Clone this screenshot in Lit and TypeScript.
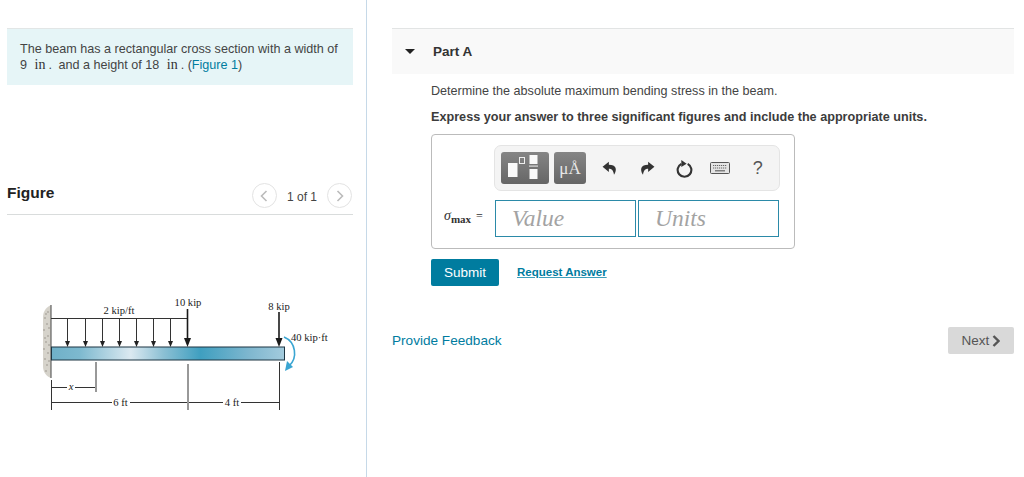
import { LitElement, html, css, svg } from 'lit';
import { customElement } from 'lit/decorators.js';

const loadArrows = [67, 85, 102, 119, 136, 153, 170];
// speckles on the wall, laid out by hand
const wallDots = [
  [45, 318], [47, 324], [44, 330], [48, 336], [46, 342], [44, 349], [48, 353], [45, 359], [47, 365], [46, 371],
  [48, 312], [49, 328], [49, 345], [49, 361], [46, 314], [45, 338],
];

@customElement('beam-figure')
export class BeamFigure extends LitElement {
  static styles = css`
    :host {
      display: block;
    }
    svg {
      display: block;
    }
    text {
      font-family: 'Liberation Serif', serif;
      font-size: 10.6px;
      fill: #222;
    }
  `;

  render() {
    // viewBox uses the figure's page coordinates so the drawing stays easy to read
    return html`
      <svg width="320" height="130" viewBox="30 290 320 130">
        <defs>
          <linearGradient id="beam" x1="0" x2="1" y1="0" y2="0">
            <stop offset="0" stop-color="#6fb0c8" />
            <stop offset="0.12" stop-color="#7db9cf" />
            <stop offset="0.34" stop-color="#dbe9f1" />
            <stop offset="0.48" stop-color="#8cc0d4" />
            <stop offset="0.64" stop-color="#3f9fc0" />
            <stop offset="0.85" stop-color="#7fb7cf" />
            <stop offset="1" stop-color="#a3cbdd" />
          </linearGradient>
        </defs>

        <path d="M51 305 C45 308 43 312 43 318 L43 366 C43 372 46 376 51 378 Z" fill="#d6d3cb" />
        ${wallDots.map(([x, y]) => svg`<circle cx=${x} cy=${y} r="0.8" fill="#96938a" />`)}
        <line x1="51" x2="51" y1="305" y2="378" stroke="#444" />
        <rect x="51.5" y="347" width="233" height="13" fill="url(#beam)" stroke="#1d3542" stroke-width="1" />

        <line x1="51" x2="187" y1="318.5" y2="318.5" stroke="#333" />
        ${loadArrows.map(
          (x) => svg`
            <line x1=${x + 0.5} x2=${x + 0.5} y1="319" y2="343" stroke="#333" />
            <path d="M${x - 2} 341 L${x + 3} 341 L${x + 0.5} 347 Z" fill="#222" />
          `
        )}

        <line x1="187.5" x2="187.5" y1="309" y2="340" stroke="#1a1a1a" stroke-width="1.6" />
        <path d="M184 338 L191 338 L187.5 347 Z" fill="#1a1a1a" />
        <line x1="279" x2="279" y1="312" y2="340" stroke="#1a1a1a" stroke-width="1.6" />
        <path d="M275.5 338 L282.5 338 L279 347 Z" fill="#1a1a1a" />

        <path d="M284 337 C296 342 298 358 289 366" fill="none" stroke="#3aa5d2" stroke-width="1.6" />
        <path d="M285 371 L287 361 L293 367 Z" fill="#3aa5d2" />

        <g stroke="#333">
          <line x1="51.5" x2="51.5" y1="380" y2="410" />
          <line x1="96" x2="96" y1="362" y2="392" />
          <line x1="188" x2="188" y1="364" y2="410" />
          <line x1="279.5" x2="279.5" y1="362" y2="410" />
          <line x1="52" x2="67" y1="387.5" y2="387.5" />
          <line x1="75" x2="95" y1="387.5" y2="387.5" />
          <line x1="52" x2="112" y1="402.5" y2="402.5" />
          <line x1="130" x2="187" y1="402.5" y2="402.5" />
          <line x1="189" x2="223" y1="402.5" y2="402.5" />
          <line x1="241" x2="279" y1="402.5" y2="402.5" />
        </g>

        <text x="119" y="314" text-anchor="middle">2 kip/ft</text>
        <text x="188" y="306" text-anchor="middle">10 kip</text>
        <text x="279" y="310" text-anchor="middle">8 kip</text>
        <text x="291" y="341">40 kip·ft</text>
        <text x="71" y="390" text-anchor="middle" font-style="italic">x</text>
        <text x="120.5" y="406" text-anchor="middle">6 ft</text>
        <text x="232" y="406" text-anchor="middle">4 ft</text>
      </svg>
    `;
  }
}

@customElement('app-root')
export class AppRoot extends LitElement {
  static styles = css`
    :host {
      display: block;
      width: 1024px;
      height: 477px;
      overflow: hidden;
      background: #fff;
      font-family: 'Liberation Sans', Arial, sans-serif;
      font-size: 12.6px;
      color: #444;
    }
    a {
      color: #007c9f;
      text-decoration: none;
    }
    .page {
      display: grid;
      grid-template-columns: 367px 1fr;
      height: 477px;
    }
    .left {
      border-right: 1px solid #c6d9e8;
      padding: 28px 13px 0 7px;
      box-sizing: border-box;
    }
    .intro {
      background: #e6f5f7;
      border-top: 1px solid #e2e6e6;
      height: 57px;
      box-sizing: border-box;
      padding: 12px 13px 0 13px;
      line-height: 16px;
      white-space: nowrap;
    }
    .unit {
      font-family: 'Liberation Serif', serif;
      font-size: 14px;
      color: #333;
      margin: 0 3px 0 4px;
    }
    .dot {
      margin-right: 3px;
    }
    .figure-head {
      margin-top: 96px;
      height: 33px;
      border-bottom: 1px solid #d9dcdc;
      display: flex;
      align-items: flex-start;
      justify-content: space-between;
    }
    .figure-title {
      font-size: 15.5px;
      font-weight: bold;
      color: #222;
      line-height: 17px;
      margin-top: 3px;
    }
    .pager {
      display: flex;
      align-items: center;
      gap: 10px;
      margin: 2px 1px 0 0;
      font-size: 12px;
    }
    .pager-count {
      padding-top: 3px;
    }
    .round {
      width: 25px;
      height: 25px;
      border: 1px solid #e3e3e3;
      border-radius: 50%;
      box-sizing: border-box;
      display: flex;
      align-items: center;
      justify-content: center;
    }
    .fig-wrap {
      margin: 75px 0 0 23px;
    }
    .right {
      padding: 28px 10px 0 25px;
    }
    .part-head {
      background: #f9f9f9;
      border-top: 1px solid #e2e4e4;
      height: 46px;
      box-sizing: border-box;
      display: flex;
      align-items: center;
      gap: 18px;
      padding-left: 13px;
      font-size: 13.5px;
      font-weight: bold;
      color: #333;
    }
    .caret {
      width: 0;
      height: 0;
      border-left: 5px solid transparent;
      border-right: 5px solid transparent;
      border-top: 5px solid #222;
    }
    .part-body {
      padding: 10px 0 0 39px;
    }
    .question {
      line-height: 14px;
    }
    .instr {
      margin-top: 12px;
      line-height: 14px;
      font-weight: bold;
      font-size: 12.65px;
      color: #3c3c3c;
    }
    .answer {
      margin-top: 10px;
      width: 364px;
      height: 115px;
      box-sizing: border-box;
      border: 1px solid #bbb;
      border-radius: 4px;
      padding: 10px 0 0 62px;
      position: relative;
    }
    .toolbar {
      width: 286px;
      height: 46px;
      box-sizing: border-box;
      background: #f4f4f4;
      border: 1px solid #e4e4e4;
      border-radius: 7px;
      display: flex;
      align-items: center;
      padding-left: 6px;
    }
    .tool {
      height: 32px;
      background: linear-gradient(#858585, #666);
      border-radius: 3px;
      display: flex;
      align-items: center;
      justify-content: center;
      box-sizing: border-box;
    }
    .tool.templates {
      width: 48px;
      margin-right: 5px;
    }
    .tool.units {
      width: 32px;
      margin-right: 5px;
      color: #e8e8e8;
      font-family: 'Liberation Serif', serif;
      font-size: 17px;
      padding-top: 2px;
    }
    .action {
      width: 37.5px;
      display: flex;
      justify-content: center;
      align-items: center;
    }
    .action.keys {
      margin-left: -2px;
    }
    .help {
      font-size: 18px;
      color: #555;
    }
    .fields {
      display: flex;
      gap: 2px;
      margin-top: 9px;
      margin-left: 1px;
    }
    .field {
      width: 141px;
      height: 37px;
      box-sizing: border-box;
      border: 1px solid #2b8aa8;
      padding: 4px 0 0 16px;
      font-family: 'Liberation Serif', serif;
      font-style: italic;
      font-size: 23.5px;
      color: #a3a3a3;
    }
    .label {
      position: absolute;
      left: 12px;
      top: 73px;
      font-family: 'Liberation Serif', serif;
      font-size: 12px;
      color: #333;
      white-space: nowrap;
    }
    .label i {
      font-size: 14px;
    }
    .label sub {
      font-size: 11px;
      font-weight: bold;
      vertical-align: -3px;
      line-height: 0;
      margin-right: 2px;
    }
    .actions {
      display: flex;
      align-items: center;
      gap: 18px;
      margin-top: 10px;
    }
    .submit {
      width: 68px;
      height: 27px;
      background: #007c9f;
      color: #fff;
      border-radius: 2px;
      display: flex;
      align-items: center;
      justify-content: center;
      font-size: 13.5px;
    }
    .request {
      font-weight: bold;
      font-size: 11.5px;
      text-decoration: underline;
      text-decoration-color: #3d9fbb;
      margin-bottom: 2px;
    }
    .foot {
      display: flex;
      align-items: center;
      justify-content: space-between;
      margin-top: 41px;
    }
    .feedback {
      font-size: 13.6px;
    }
    .next {
      width: 66px;
      height: 27px;
      background: #d9d9d9;
      border-radius: 2px;
      color: #555;
      display: flex;
      align-items: center;
      justify-content: center;
      gap: 3px;
      font-size: 13.5px;
    }
  `;

  render() {
    return html`
      <div class="page">
        <section class="left">
          <div class="intro">
            The beam has a rectangular cross section with a width of<br />
            9 <span class="unit">in</span><span class="dot">.</span> and a height of 18 <span class="unit">in</span>.
            (<a href="#">Figure 1</a>)
          </div>
          <div class="figure-head">
            <div class="figure-title">Figure</div>
            <div class="pager">
              <span class="round">
                <svg width="8" height="12" viewBox="0 0 8 12"><path d="M6.5 1 L1.5 6 L6.5 11" fill="none" stroke="#bbb" stroke-width="1.6" /></svg>
              </span>
              <span class="pager-count">1 of 1</span>
              <span class="round">
                <svg width="8" height="12" viewBox="0 0 8 12"><path d="M1.5 1 L6.5 6 L1.5 11" fill="none" stroke="#bbb" stroke-width="1.6" /></svg>
              </span>
            </div>
          </div>
          <div class="fig-wrap"><beam-figure></beam-figure></div>
        </section>

        <section class="right">
          <div class="part-head"><span class="caret"></span><span>Part A</span></div>
          <div class="part-body">
            <div class="question">Determine the absolute maximum bending stress in the beam.</div>
            <div class="instr">Express your answer to three significant figures and include the appropriate units.</div>
            <div class="answer">
              <div class="toolbar">
                <div class="tool templates">
                  <svg width="40" height="32" viewBox="0 0 40 32">
                    <rect x="3" y="11" width="9.5" height="14" fill="#fafafa" />
                    <rect x="14.5" y="5.5" width="5" height="6" fill="none" stroke="#eee" />
                    <rect x="24.5" y="3" width="8" height="9" fill="#fafafa" />
                    <rect x="24" y="13.5" width="9" height="1.2" fill="#ddd" />
                    <rect x="24.5" y="17" width="8" height="10" fill="#fafafa" />
                  </svg>
                </div>
                <div class="tool units">μÅ</div>
                <span class="action">
                  <svg width="16" height="16" viewBox="0 0 14 14"><path d="M6 1.5 L0.5 6 L6 10.5 L6 7.6 C8.5 7.6 10 9 10.5 13 C13.5 8.5 12.5 4.2 6 4.2 Z" fill="#333" /></svg>
                </span>
                <span class="action">
                  <svg width="16" height="16" viewBox="0 0 14 14"><path d="M8 1.5 L13.5 6 L8 10.5 L8 7.6 C5.5 7.6 4 9 3.5 13 C0.5 8.5 1.5 4.2 8 4.2 Z" fill="#333" /></svg>
                </span>
                <span class="action">
                  <svg width="17" height="19" viewBox="0 0 16 18"><path d="M5 4.6 A6.5 6.5 0 1 0 11 4.6" fill="none" stroke="#333" stroke-width="2" /><path d="M5 1 L10 4.5 L5 7.5 Z" fill="#333" /></svg>
                </span>
                <span class="action keys">
                  <svg width="20" height="12" viewBox="0 0 20 12">
                    <rect x="0.5" y="0.5" width="19" height="11" rx="1" fill="#e4e4e4" stroke="#555" />
                    <path d="M3 3.5 H17 M3 6 H17" stroke="#666" stroke-width="1.2" stroke-dasharray="1.2 0.8" />
                    <path d="M5 8.8 H15" stroke="#666" stroke-width="1.2" />
                  </svg>
                </span>
                <span class="action help">?</span>
              </div>
              <div class="label"><i>σ</i><sub>max</sub> =</div>
              <div class="fields">
                <div class="field">Value</div>
                <div class="field">Units</div>
              </div>
            </div>
            <div class="actions">
              <div class="submit">Submit</div>
              <a class="request" href="#">Request Answer</a>
            </div>
          </div>
          <div class="foot">
            <a class="feedback" href="#">Provide Feedback</a>
            <div class="next">
              Next
              <svg width="8" height="12" viewBox="0 0 8 12"><path d="M1.5 1 L6.5 6 L1.5 11" fill="none" stroke="#555" stroke-width="2.4" /></svg>
            </div>
          </div>
        </section>
      </div>
    `;
  }
}
